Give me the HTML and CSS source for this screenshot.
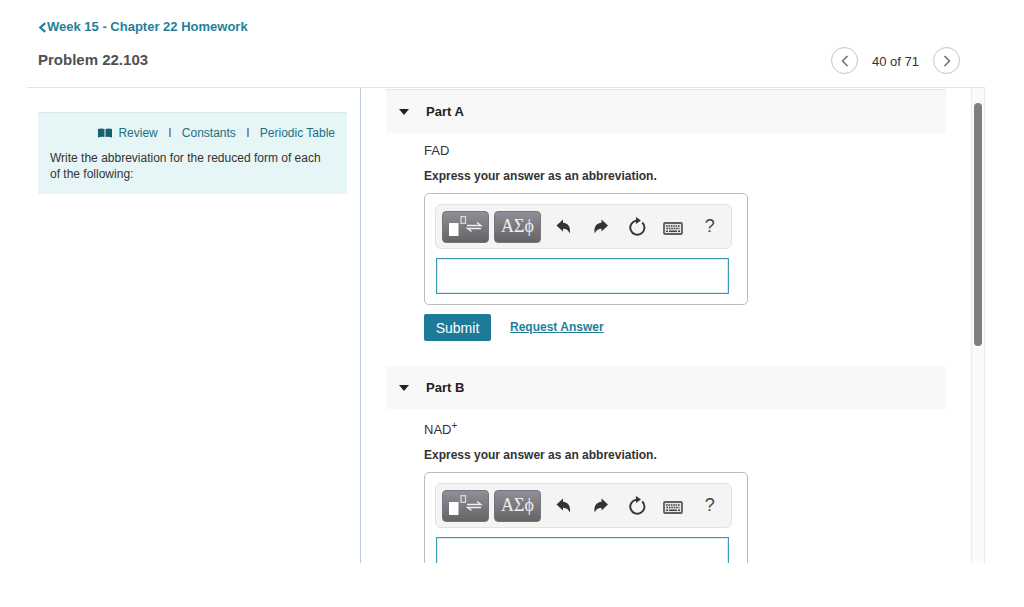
FILE: index.html
```html
<!DOCTYPE html>
<html lang="en">
  <head>
    <meta charset="UTF-8" />
    <meta name="viewport" content="width=device-width, initial-scale=1.0" />
    <title>Problem 22.103</title>
    <link rel="stylesheet" href="styles.css">
  </head>
  <body>
    <!-- shared icons -->
    <svg class="sprite" aria-hidden="true">
      <symbol id="template" viewBox="0 0 34 22">
        <rect x="0" y="7" width="9.500" height="13" fill="#fff" />
        <rect x="12" y="0.700" width="4.500" height="6.600" fill="none" stroke="#ddd" stroke-width="1.200" />
        <path d="M18 9.500H32L28 6.500M32 12.500H18.500l4 3" fill="none" stroke="#f0f0f0" stroke-width="1.300" />
      </symbol>
      <symbol id="undo" viewBox="0 0 16 16">
        <path d="M0.500 6.500L7 0.500v3.200C12 4 15 8 13.800 14.500 12.500 11.500 10.500 9.800 7 9.700V12.500z" fill="#333" />
      </symbol>
      <symbol id="redo" viewBox="0 0 16 16">
        <path d="M15 6.500L8.500 0.500v3.200C3.500 4 .5 8 1.700 14.500 3 11.500 5 9.800 8.500 9.700V12.500z" fill="#333" />
      </symbol>
      <symbol id="reset" viewBox="0 0 18 18">
        <path d="M13.500 5.200A6.700 6.700 0 1 1 8 3.400" fill="none" stroke="#333" stroke-width="1.800" />
        <path d="M7.500 0l4.800 3.400-4.800 3.200z" fill="#333" />
      </symbol>
      <symbol id="keyboard" viewBox="0 0 20 13">
        <rect x="1" y="1" width="18" height="11" rx="1" fill="#e6e6e6" stroke="#606060" stroke-width="1.800" />
        <path d="M3 4h14M3.500 6.500h13" stroke="#444" stroke-width="1.600" stroke-dasharray="1.600 0.800" />
        <path d="M3 9.300h2M6 9.300h8M15 9.300h2" stroke="#444" stroke-width="1.500" />
      </symbol>
    </svg>

    <div class="page">
      <header class="header">
        <div class="titles">
          <a href="#" class="back">
            <svg class="back-icon" viewBox="0 0 8 10"><path d="M6.500 1L2 5l4.500 4" /></svg>Week 15 - Chapter 22 Homework
          </a>
          <h1 class="title">Problem 22.103</h1>
        </div>
        <nav class="pager">
          <button class="pager-btn" aria-label="Previous">
            <svg viewBox="0 0 10 14"><path d="M7.500 2L2.500 7l5 5" /></svg>
          </button>
          <span class="count">40 of 71</span>
          <button class="pager-btn" aria-label="Next">
            <svg viewBox="0 0 10 14"><path d="M2.500 2l5 5-5 5" /></svg>
          </button>
        </nav>
      </header>

      <main class="main">
        <aside class="side">
          <div class="intro">
            <div class="links">
              <a href="#" class="review">
                <svg class="book" viewBox="0 0 14 10">
                  <path d="M0 1Q3.500 0 6.500 1v8Q3.500 8.300 0 9.500zM7.500 1Q10.500 0 14 1V9.500Q10.500 8.300 7.500 9z" />
                </svg>Review</a>
              <span class="sep">I</span>
              <a href="#">Constants</a>
              <span class="sep">I</span>
              <a href="#">Periodic Table</a>
            </div>
            <p>Write the abbreviation for the reduced form of each of the following:</p>
          </div>
        </aside>

        <div class="content">
          <!-- part a -->
          <section class="part">
            <h2 class="part-head first"><button class="toggle" aria-expanded="true"><span class="caret"></span>Part A</button></h2>
            <div class="part-body">
              <p class="question">FAD</p>
              <label class="hint" for="answer-a">Express your answer as an abbreviation.</label>
              <div class="answer">
                <div class="toolbar">
                  <button class="key" aria-label="Templates"><svg class="template"><use href="#template" /></svg></button>
                  <button class="key greek">ΑΣϕ</button>
                  <div class="tools">
                    <button class="tool" aria-label="Undo"><svg class="icon"><use href="#undo" /></svg></button>
                    <button class="tool" aria-label="Redo"><svg class="icon"><use href="#redo" /></svg></button>
                    <button class="tool" aria-label="Reset"><svg class="icon-lg"><use href="#reset" /></svg></button>
                    <button class="tool" aria-label="Keyboard"><svg class="icon-kb"><use href="#keyboard" /></svg></button>
                    <button class="tool">?</button>
                  </div>
                </div>
                <input type="text" id="answer-a" class="field" />
              </div>
              <div class="actions">
                <button class="submit">Submit</button>
                <a href="#" class="request">Request Answer</a>
              </div>
            </div>
          </section>

          <!-- part b -->
          <section class="part">
            <h2 class="part-head"><button class="toggle" aria-expanded="true"><span class="caret"></span>Part B</button></h2>
            <div class="part-body">
              <p class="question charged">NAD<sup>+</sup></p>
              <label class="hint" for="answer-b">Express your answer as an abbreviation.</label>
              <div class="answer">
                <div class="toolbar">
                  <button class="key" aria-label="Templates"><svg class="template"><use href="#template" /></svg></button>
                  <button class="key greek">ΑΣϕ</button>
                  <div class="tools">
                    <button class="tool" aria-label="Undo"><svg class="icon"><use href="#undo" /></svg></button>
                    <button class="tool" aria-label="Redo"><svg class="icon"><use href="#redo" /></svg></button>
                    <button class="tool" aria-label="Reset"><svg class="icon-lg"><use href="#reset" /></svg></button>
                    <button class="tool" aria-label="Keyboard"><svg class="icon-kb"><use href="#keyboard" /></svg></button>
                    <button class="tool">?</button>
                  </div>
                </div>
                <input type="text" id="answer-b" class="field" />
              </div>
            </div>
          </section>
        </div>

        <div class="track"><div class="thumb"></div></div>
      </main>
    </div>
  </body>
</html>
```
FILE: styles.css
```css
* {
  box-sizing: border-box;
  padding: 0;
  margin: 0;
}
body {
  font-family: "Liberation Sans", Arial, sans-serif;
  font-size: 13px;
  line-height: 18px;
  color: #333;
  background: #fff;
}
button {
  font-family: inherit;
  border: none;
  background: none;
  cursor: pointer;
}
a {
  color: #1d6f82;
  text-decoration: none;
}
.sprite {
  display: none;
}
.page {
  display: flex;
  flex-direction: column;
  height: 100vh;
  padding: 0 39px 44px 27px;
}
/* header */
.header {
  display: flex;
  justify-content: space-between;
  align-items: flex-end;
  padding: 18px 25px 13px 11px;
  border-bottom: 1px solid #e4e4e4;
}
.titles {
  display: flex;
  flex-direction: column;
  gap: 14px;
  padding-bottom: 4px;
}
.back {
  display: flex;
  align-items: center;
  font-size: 13px;
  font-weight: bold;
  color: #1f7f9b;
}
.back-icon {
  width: 9px;
  height: 11px;
  fill: none;
  stroke: #1f7f9b;
  stroke-width: 2;
}
.title {
  font-size: 15px;
  line-height: 20px;
  color: #505050;
}
.pager {
  display: flex;
  align-items: center;
  gap: 14px;
}
.pager-btn {
  display: flex;
  align-items: center;
  justify-content: center;
  width: 27px;
  height: 27px;
  border: 1px solid #c4c4c4;
  border-radius: 50%;
}
.pager-btn svg {
  width: 10px;
  height: 14px;
  fill: none;
  stroke: #66706e;
  stroke-width: 1.5;
}
.count {
  padding-top: 3px;
}
/* columns */
.main {
  display: flex;
  flex: 1;
  min-height: 0;
}
.side {
  width: 334px;
  flex-shrink: 0;
  padding: 24px 13px 0 11px;
  border-right: 1px solid #bccbda;
}
.intro {
  padding: 11px 12px 12px;
  border-top: 1px solid #dbe6e6;
  background: #e6f5f6;
  font-size: 12px;
}
.intro p {
  padding-right: 8px;
  line-height: 16px;
}
.links {
  display: flex;
  justify-content: flex-end;
  margin-bottom: 8px;
}
.links a {
  white-space: nowrap;
}
.review {
  display: flex;
  align-items: center;
}
.book {
  width: 14px;
  height: 10px;
  margin-right: 6px;
  fill: #176072;
}
.sep {
  width: 24px;
  text-align: center;
  color: #555;
}
.content {
  flex: 1;
  padding: 1px 25px 0;
  overflow-y: auto;
  scrollbar-width: none;
}
.part {
  margin-bottom: 25px;
}
.part-head {
  background: #f8f8f8;
}
.part-head.first {
  border-top: 1px solid #e4e4e4;
}
.toggle {
  display: flex;
  align-items: center;
  width: 100%;
  height: 43px;
  padding-left: 13px;
  font-size: 13px;
  font-weight: bold;
  color: #222;
}
.caret {
  margin-right: 17px;
  border: 5px solid transparent;
  border-top: 6px solid #222;
  border-bottom: 0;
}
.part-body {
  padding: 9px 0 0 38px;
}
.question {
  margin-bottom: 7px;
}
.charged {
  padding-top: 3px;
}
.question sup {
  font-size: 10px;
  line-height: 0;
}
.hint {
  display: block;
  margin-bottom: 8px;
  font-size: 12px;
  font-weight: bold;
}
.answer {
  max-width: 324px;
  padding: 10px 15px 10px 10px;
  border: 1px solid #bdbdbd;
  border-radius: 5px;
}
.toolbar {
  display: flex;
  align-items: center;
  gap: 5px;
  height: 45px;
  padding: 0 3px 0 6px;
  border: 1px solid #e2e2e2;
  border-radius: 6px;
  background: #f4f4f4;
}
.key {
  display: flex;
  align-items: center;
  justify-content: center;
  width: 47px;
  height: 32px;
  border: 1px solid #77757b;
  border-radius: 4px;
  background: linear-gradient(#908e98, #646464);
  color: #f0f0f0;
}
.greek {
  font-family: "Liberation Serif", "Times New Roman", serif;
  font-size: 18px;
}
.template {
  width: 34px;
  height: 22px;
}
.tools {
  display: flex;
  flex: 1;
}
.tool {
  display: flex;
  flex: 1;
  align-items: center;
  justify-content: center;
  height: 32px;
  font-size: 18px;
  color: #444;
}
.icon {
  width: 16px;
  height: 16px;
}
.icon-lg {
  width: 19px;
  height: 19px;
}
.icon-kb {
  width: 20px;
  height: 13px;
  margin-top: 3px;
}
.field {
  display: block;
  width: calc(100% - 4px);
  height: 36px;
  margin: 9px 0 0 1px;
  padding: 0 8px;
  border: 1px solid #3d9ab5;
  box-shadow: inset 0 0 0 1px #d3eaf1;
  font-size: 16px;
}
.field:focus {
  outline: none;
}
.actions {
  display: flex;
  align-items: center;
  gap: 19px;
  margin-top: 9px;
}
.submit {
  width: 67px;
  height: 27px;
  border-radius: 2px;
  background: #1d7a98;
  color: #fff;
  font-size: 14px;
}
.request {
  padding-bottom: 2px;
  font-size: 12px;
  font-weight: bold;
  color: #1f7f9b;
  text-decoration: underline;
}
/* scrollbar */
.track {
  width: 14px;
  flex-shrink: 0;
  padding: 15px 2px 0;
  border: 1px solid #ebebeb;
  border-width: 0 1px;
  background: #fafafa;
}
.thumb {
  height: 243px;
  border-radius: 4px;
  background: #7f7f7f;
}
```
